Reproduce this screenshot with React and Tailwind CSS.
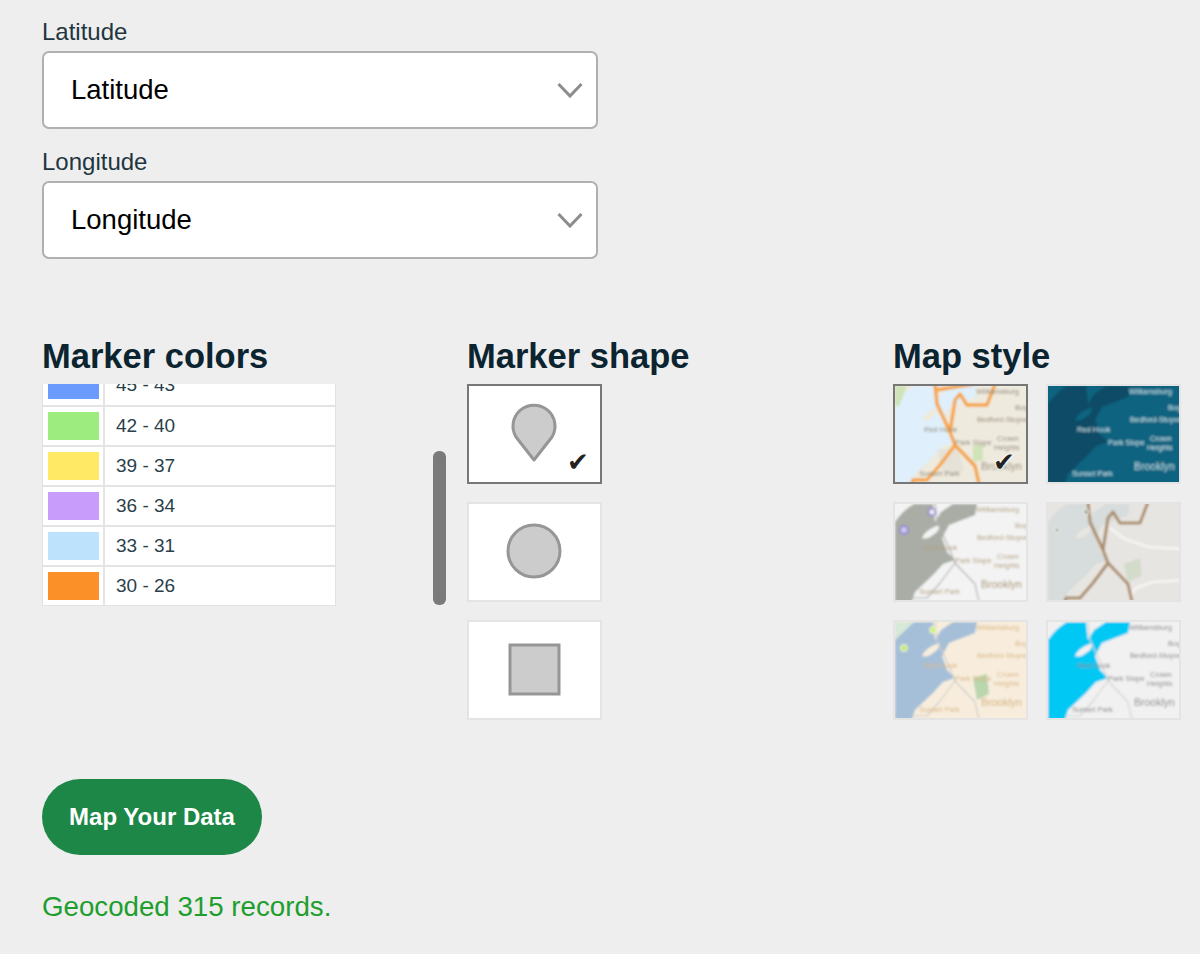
import { useId } from "react";

const FONT = "font-['Liberation_Sans',Arial,sans-serif]";

const legendRows = [
  ["45 - 43", "bg-[#6b9bfc]"],
  ["42 - 40", "bg-[#9dec80]"],
  ["39 - 37", "bg-[#ffe965]"],
  ["36 - 34", "bg-[#c89cfb]"],
  ["33 - 31", "bg-[#bde3fc]"],
  ["30 - 26", "bg-[#fb8f28]"],
];

const WATER = "M0 18 Q8 6 19 0 L38 0 L40 18 L46 8 L58 0 L82 0 L80 11 L54 21 L47 34 L52 48 L60 56 L48 60 L38 71 L20 88 L16 100 L0 100Z";
const ISLAND = "M27 34 Q30 26 44 21 Q45 27 38 31 Q32 36 27 34Z";
const ROADS = [
  "M40 -2 L42 18 L55 46 L60 59 L45 79 L32 94 L18 94 L16 102",
  "M60 59 L80 80 L85 102",
  "M55 46 L60 14 L65 8 L72 19 L92 19 L100 -2",
  "M41 4 L79 -2",
];
const ROADS_THIN = [
  "M40 -2 L42 18 L55 46 L60 59 L45 79 L32 94 L18 94",
  "M60 59 L80 80 L85 102",
];
const ROADS_ALT = [
  "M40 -2 L42 18 L55 46 L60 59 L45 79 L32 94 L18 94 L16 102",
  "M60 59 L80 80 L85 102",
  "M55 46 L60 14 L65 8 L72 19 L92 19 L100 -2",
];
const WHITE_ROADS = ["M62 24 L75 34 L100 43 L138 45", "M82 92 L88 84 L105 78 L138 76"];

function MapThumb({ land, water, road, roadWidth, label, big, parks, dots, white, roads, whiteWidth, noLabels, island }) {
  const id = useId();
  const labels = [
    ["Williamsburg", 81, 8, 7.5],
    ["Bog", 120, 24, 7.5],
    ["Bedford-Stuyve", 82, 36, 7.5],
    ["Red Hook", 29, 46, 7.5],
    ["Park Slope", 60, 59, 7.5],
    ["Crown", 102, 55, 7.5],
    ["Heights", 99, 64, 7.5],
    ["Brooklyn", 86, 84, 10.5],
    ["Sunset Park", 24, 90, 7.5],
  ];
  return (
    <svg viewBox="0 0 131 96" className="block w-full h-full">
      <defs>
        <filter id={id} x="-10%" y="-10%" width="120%" height="120%">
          <feGaussianBlur stdDeviation="0.8" />
        </filter>
      </defs>
      <g filter={`url(#${id})`}>
        <rect x="-5" y="-5" width="142" height="106" fill={land} />
        <path d={WATER} fill={water} />
        <path d={ISLAND} fill={island || land} />
        {parks && parks.map((p, i) => (
          <path key={i} d={p[0]} fill={p[1]} />
        ))}
        {white && WHITE_ROADS.map((d, i) => (
          <path key={i} d={d} fill="none" stroke={white} strokeWidth={whiteWidth || 2} />
        ))}
        {(roads || ROADS).map((d, i) => (
          <path key={i} d={d} fill="none" stroke={road} strokeWidth={roadWidth} strokeLinejoin="round" />
        ))}
        {dots && dots.map((d, i) => (
          <circle key={i} cx={d[0]} cy={d[1]} r={d[2]} fill={d[3]} stroke={d[4]} strokeWidth="1.5" />
        ))}
        {!noLabels && labels.map(([t, x, y, s]) => (
          <text key={t} x={x} y={y} fontSize={s} fill={s > 8 ? big : label} fontFamily="Liberation Sans, Arial, sans-serif">{t}</text>
        ))}
      </g>
    </svg>
  );
}

function ShapeSvg({ children }) {
  const id = useId();
  return (
    <svg viewBox="0 0 131 96" className="block w-full h-full">
      <defs>
        <filter id={id} x="-10%" y="-10%" width="120%" height="120%">
          <feGaussianBlur stdDeviation="0.45" />
        </filter>
      </defs>
      <g filter={`url(#${id})`}>{children}</g>
    </svg>
  );
}

function Tile({ selected, children, check }) {
  return (
    <div className={`relative w-[135px] h-[100px] bg-white border-2 overflow-hidden ${selected ? "border-[#777777]" : "border-[#e4e4e4]"}`}>
      {children}
      {check && (
        <span className="absolute left-[98px] top-[60px] text-[26px] leading-[32px] text-[#222222] font-['DejaVu_Sans',sans-serif] [text-shadow:0_0_2px_#fff,0_0_2px_#fff,0_0_3px_#fff]">
          ✔
        </span>
      )}
    </div>
  );
}

function Field({ label }) {
  return (
    <div className="flex flex-col">
      <div className="text-[24px] leading-[28px] h-[33px] text-[#1f3540]">{label}</div>
      <div className="w-[556px] h-[78px] bg-white border-2 border-[#b0b0b0] rounded-[7px] flex items-center justify-between pl-[27px] pr-[13px]">
        <span className="text-[27.5px] text-black leading-none">{label}</span>
        <svg width="26" height="16" viewBox="0 0 26 16" fill="none" stroke="#8c8c8c" strokeWidth="3">
          <path d="M1.5 2 L13 14 L24.5 2" />
        </svg>
      </div>
    </div>
  );
}

export default function App() {
  return (
    <div className={`${FONT} w-[1200px] h-[954px] bg-[#eeeeee] overflow-hidden pl-[42px] pt-[18px]`}>
      <div className="flex flex-col gap-[19px]">
        <Field label="Latitude" />
        <Field label="Longitude" />
      </div>

      <div className="grid grid-cols-[425px_426px_1fr] mt-[76px]">
        <div>
          <h2 className="text-[34.5px] leading-[42px] h-[49px] font-bold text-[#0b2430]">Marker colors</h2>
          <div className="flex">
            <div className="w-[294px] h-[222px] overflow-hidden flex flex-col justify-end bg-white">
              <div className="border border-[#e2e2e2] border-t-0 flex flex-col">
                {legendRows.map(([t, c], i) => (
                  <div key={t} className={`flex h-[40px] shrink-0 ${i > 0 ? "border-t-2 border-[#e4e4e4]" : ""}`}>
                    <div className="w-[62px] border-r-2 border-[#e4e4e4] flex items-center justify-center shrink-0">
                      <div className={`w-[51px] h-[28px] ${c}`} />
                    </div>
                    <div className="flex items-center pl-[11px] text-[19px] text-[#2a3f4a]">{t}</div>
                  </div>
                ))}
              </div>
            </div>
            <div className="ml-[97px] mt-[67px] w-[13px] h-[154px] rounded-[6px] bg-[#7a7a7a]" />
          </div>
        </div>

        <div>
          <h2 className="text-[34.5px] leading-[42px] h-[49px] font-bold text-[#0b2430]">Marker shape</h2>
          <div className="flex flex-col gap-[18px]">
            <Tile selected check>
              <ShapeSvg>
                <path d="M65 74 L47 51 A21 21 0 1 1 83 51 Z" fill="#cccccc" stroke="#969696" strokeWidth="3" strokeLinejoin="round" />
              </ShapeSvg>
            </Tile>
            <Tile>
              <ShapeSvg>
                <circle cx="65" cy="47" r="26" fill="#cccccc" stroke="#969696" strokeWidth="3" />
              </ShapeSvg>
            </Tile>
            <Tile>
              <ShapeSvg>
                <rect x="41" y="23" width="49" height="49" fill="#cccccc" stroke="#969696" strokeWidth="3" />
              </ShapeSvg>
            </Tile>
          </div>
        </div>

        <div>
          <h2 className="text-[34.5px] leading-[42px] h-[49px] font-bold text-[#0b2430]">Map style</h2>
          <div className="grid grid-cols-[135px_135px] gap-x-[18px] gap-y-[18px]">
            <Tile selected check>
              <MapThumb
                land="#eeeade" water="#dfeffb" road="#f6a443" roadWidth="3.4" label="#938a76" big="#938a76"
                parks={[["M0 0 L12 0 L4 20 L0 20Z", "#cfe3b8"], ["M78 60 L88 58 L88 74 L78 76Z", "#cfe3b8"], ["M42 64 L62 62 L70 84 L50 92Z", "#e6e2d8"]]}
              />
            </Tile>
            <Tile>
              <MapThumb land="#0f6480" water="#0d4c66" road="#0f5a74" roadWidth="1" label="#d4e8ee" big="#b9d8e2" roads={[]} />
            </Tile>
            <Tile>
              <MapThumb
                land="#f3f3f3" water="#a9ada6" road="#b4b4b4" roadWidth="1.2" label="#b39f7c" big="#a8906a" roads={ROADS_THIN}
                dots={[[37, 8, 3.5, "#eee", "#8a78dd"], [9, 26, 4, "#c9c4e8", "#8a78dd"]]}
              />
            </Tile>
            <Tile>
              <MapThumb
                land="#e7e5e1" water="#d7dcdc" road="#ab8d6c" roadWidth="3" label="#e7e5e1" big="#e7e5e1" noLabels
                white="#f8f8f6" whiteWidth="2.2" roads={ROADS_ALT}
                parks={[["M76 60 L92 54 L94 72 L80 78Z", "#d3dccb"]]}
                dots={[[38, 8, 2.2, "#4f6b45", "#eeeeea"], [9, 26, 2, "#4f6b45", "#eeeeea"]]}
              />
            </Tile>
            <Tile>
              <MapThumb
                land="#f8eddd" water="#a6bfd8" road="#cfcdc8" roadWidth="1.2" label="#d8b783" big="#d1b078" roads={ROADS_THIN}
                parks={[["M0 0 L19 0 L0 18Z", "#d6e8d8"], ["M78 56 L92 52 L94 72 L82 78Z", "#b9d6ad"]]}
                dots={[[38, 8, 3, "#c9f26a", "#e8f6c0"], [9, 26, 3, "#b7e85a", "#e8f6c0"]]}
              />
            </Tile>
            <Tile>
              <MapThumb land="#f1f1f1" water="#05c8f5" road="#d4d4d4" roadWidth="1.2" label="#8a8a8a" big="#8a8a8a" roads={ROADS_THIN} />
            </Tile>
          </div>
        </div>
      </div>

      <button className="mt-[59px] w-[220px] h-[76px] rounded-full bg-[#1c8746] text-white font-bold text-[24px] block">
        Map Your Data
      </button>
      <p className="mt-[34px] text-[27.7px] leading-[36px] text-[#1e9e2e]">Geocoded 315 records.</p>
    </div>
  );
}
